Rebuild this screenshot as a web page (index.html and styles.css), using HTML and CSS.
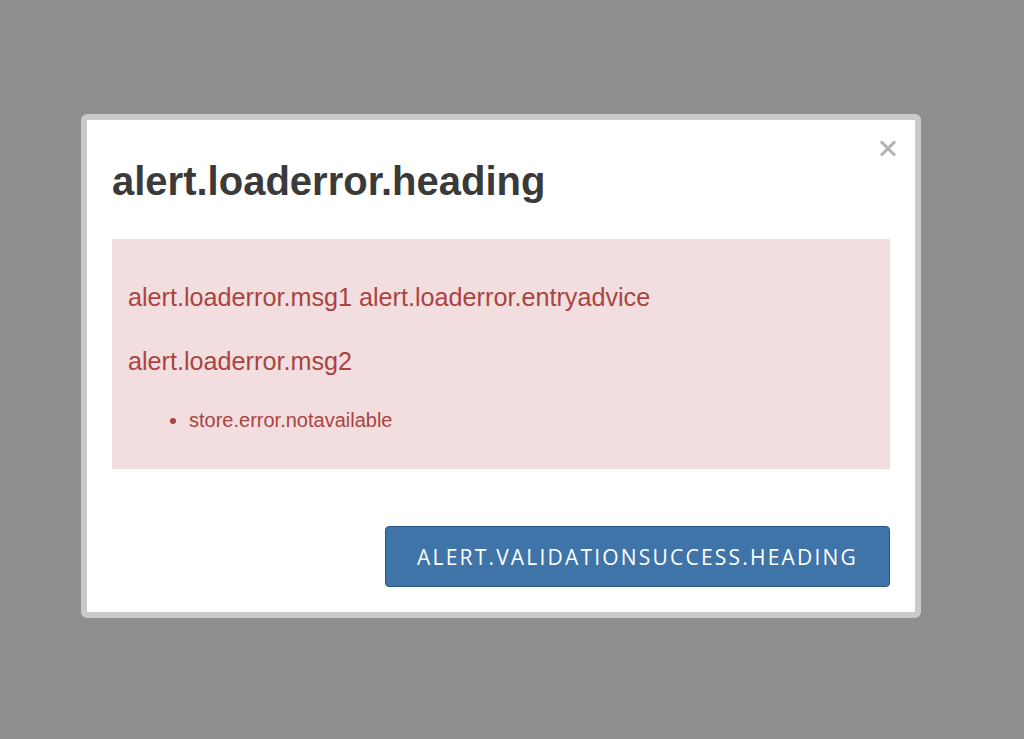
FILE: index.html
```html
<!DOCTYPE html>
<html lang="en">
<head>
<meta charset="utf-8">
<title>alert.loaderror.heading</title>
<link rel="stylesheet" href="styles.css">
</head>
<body>
<div class="backdrop">
  <div class="modal" role="dialog">
    <button class="close" type="button" aria-label="Close">
      <svg viewBox="0 0 18 17" width="18" height="17" aria-hidden="true">
        <path d="M2 1.5 L16 15.5 M16 1.5 L2 15.5" stroke="currentColor" stroke-width="3" stroke-linecap="butt"/>
      </svg>
    </button>
    <h1 class="modal-title">alert.loaderror.heading</h1>
    <div class="alert">
      <p>alert.loaderror.msg1 alert.loaderror.entryadvice</p>
      <p>alert.loaderror.msg2</p>
      <ul>
        <li>store.error.notavailable</li>
      </ul>
    </div>
    <div class="modal-footer">
      <button class="btn-primary" type="button">alert.validationsuccess.heading</button>
    </div>
  </div>
</div>
</body>
</html>
```

FILE: styles.css
```css
html, body {
  margin: 0;
  height: 100%;
}

body {
  background: #8f8f8f;
  font-family: "Liberation Sans", Arial, sans-serif;
}

.backdrop {
  padding: 114px 0 0 81px;
}

.modal {
  position: relative;
  box-sizing: border-box;
  width: 840px;
  height: 504px;
  padding: 25px;
  background: #ffffff;
  border: 6px solid #c9c9c9;
  border-radius: 6px;
}

.close {
  position: absolute;
  top: 20px;
  right: 18px;
  padding: 0;
  border: 0;
  background: none;
  color: #b3b3b3;
  line-height: 0;
  cursor: pointer;
}

.modal-title {
  margin: 14px 0 36px;
  font-size: 40px;
  line-height: 44px;
  font-weight: bold;
  color: #3a3a3a;
}

.alert {
  padding: 41px 16px 35px;
  background: #f2dede;
  color: #a94442;
}

.alert p {
  margin: 0 0 29px;
  font-size: 25.2px;
  line-height: 35px;
}

.alert ul {
  margin: -2px 0 0;
  padding-left: 61px;
  font-size: 20px;
  line-height: 28px;
}

.modal-footer {
  display: flex;
  justify-content: flex-end;
  margin-top: 57px;
}

.btn-primary {
  box-sizing: border-box;
  width: 505px;
  height: 61px;
  background: #3e74a7;
  border: 1px solid #2a5885;
  border-radius: 4px;
  color: #ffffff;
  font-family: "Open Sans", sans-serif;
  font-size: 21px;
  letter-spacing: 2.2px;
  text-transform: uppercase;
  cursor: pointer;
}
```
